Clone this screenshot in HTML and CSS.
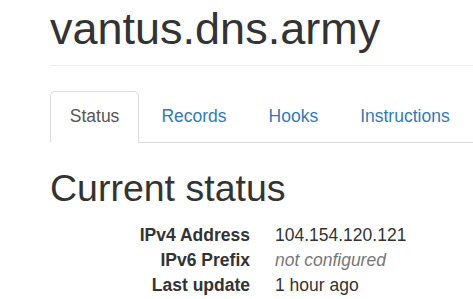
FILE: index.html
```html
<!DOCTYPE html>
<html lang="en">
<head>
    <meta charset="UTF-8">
    <title>vantus.dns.army</title>
    <link rel="stylesheet" href="styles.css">
</head>
<body>
<div class="container">
    <div class="page-header">
        <h1>vantus.dns.army</h1>
    </div>

    <ul class="nav-tabs">
        <li class="active"><a href="#status">Status</a></li>
        <li><a href="#records">Records</a></li>
        <li><a href="#hooks">Hooks</a></li>
        <li><a href="#instructions">Instructions</a></li>
    </ul>

    <div class="tab-content">
        <h2>Current status</h2>
        <dl class="dl-horizontal">
            <dt>IPv4 Address</dt>
            <dd>104.154.120.121</dd>
            <dt>IPv6 Prefix</dt>
            <dd><em class="text-muted">not configured</em></dd>
            <dt>Last update</dt>
            <dd>1 hour ago</dd>
        </dl>
    </div>
</div>
</body>
</html>
```

FILE: styles.css
```css
html, body { margin: 0; padding: 0; background-color: #fff; overflow: hidden; }
body { font-family: "Liberation Sans", Arial, Helvetica, sans-serif; font-size: 17.5px; line-height: 25px; color: #333; }
.container { margin-left: 50px; }
.page-header { padding-bottom: 11px; margin: 0 0 25px 0; border-bottom: 1px solid #eee; }
h1 { font-size: 45px; font-weight: 500; line-height: 1.1; margin: 4px 0 0 0; }
.nav-tabs { list-style: none; margin: 0; padding: 0; display: flex; border-bottom: 1px solid #ddd; }
.nav-tabs li { margin-bottom: -1px; }
.nav-tabs a { display: block; padding: 12.5px 18.75px; margin-right: 2.5px; line-height: 25px; border: 1px solid transparent; border-radius: 5px 5px 0 0; color: #337ab7; text-decoration: none; }
.nav-tabs .active a { color: #555; background-color: #fff; border-color: #ddd; border-bottom-color: transparent; }
h2 { font-size: 37.5px; font-weight: 500; line-height: 1.1; margin: 25px 0 14px 0; }
.dl-horizontal { display: grid; grid-template-columns: 200px 1fr; column-gap: 25px; margin: 0; }
.dl-horizontal dt { font-weight: bold; text-align: right; }
.dl-horizontal dd { margin: 0; }
.text-muted { color: #777; }
```
